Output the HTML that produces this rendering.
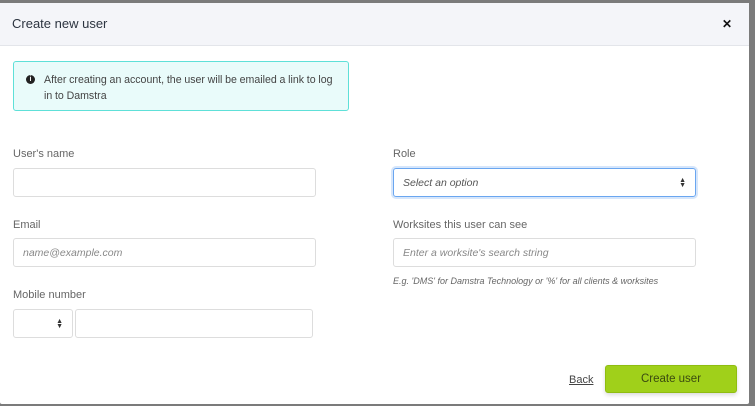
<!DOCTYPE html>
<html><head><style>
*{box-sizing:border-box;margin:0;padding:0}
body{width:755px;height:406px;background:#7b7b7b;font-family:"Liberation Sans",sans-serif;position:relative;overflow:hidden}
.m{position:absolute;left:0;top:3px;width:749px;height:401px;background:#fff;border-radius:2px}
.h{height:43px;background:#f4f5f9;border-bottom:1px solid #e3e5ea;padding:13px 12px;font-size:13px;color:#2c3440;position:relative}
.x{position:absolute;right:17px;top:14px;font-size:12px;font-weight:bold;color:#111}
.info{position:absolute;left:13px;top:58px;width:336px;height:50px;background:#e9fbfa;border:1px solid #5ee0d8;border-radius:3px;font-size:10.6px;color:#444;padding:10px 8px 0 30px;line-height:16px;word-spacing:-0.2px}
.ic{position:absolute;left:12px;top:13px;width:9px;height:9px;border-radius:50%;background:#222;color:#fff;font-size:7px;line-height:9px;text-align:center;font-weight:bold}
.l{position:absolute;font-size:11px;color:#666}
.i{position:absolute;border:1px solid #ddd;border-radius:3px;height:29px;font-size:10.5px;font-style:italic;color:#888;padding:8px 9px}
.s{border:1px solid #6aa6f0;box-shadow:0 0 0 2px #d6e6fb;color:#555}
.ar{position:absolute;right:9px;top:9px;font-size:7px;line-height:5px;color:#333;font-style:normal}
.hint{position:absolute;left:393px;top:273px;font-size:9px;font-style:italic;color:#666}
.back{position:absolute;left:569px;top:371px;font-size:11px;color:#444;text-decoration:underline}
.btn{position:absolute;left:605px;top:362px;width:132px;height:28px;background:#a0d01a;border:1px solid #8fbd10;border-radius:3px;font-size:11.5px;color:#3a4a10;text-align:center;line-height:26px;box-shadow:0 2px 4px rgba(0,0,0,.15)}
</style></head><body>
<div class="m">
<div class="h">Create new user<span class="x">✕</span></div>
<div class="info"><span class="ic">i</span>After creating an account, the user will be emailed a link to log in to Damstra</div>
<div class="l" style="left:13px;top:145px">User's name</div>
<div class="i" style="left:13px;top:165px;width:303px"></div>
<div class="l" style="left:13px;top:216px">Email</div>
<div class="i" style="left:13px;top:235px;width:303px">name@example.com</div>
<div class="l" style="left:13px;top:286px">Mobile number</div>
<div class="i" style="left:13px;top:306px;width:60px"><span class="ar">▲<br>▼</span></div>
<div class="i" style="left:75px;top:306px;width:238px"></div>
<div class="l" style="left:393px;top:145px">Role</div>
<div class="i s" style="left:393px;top:165px;width:303px">Select an option<span class="ar">▲<br>▼</span></div>
<div class="l" style="left:393px;top:216px">Worksites this user can see</div>
<div class="i" style="left:393px;top:235px;width:303px">Enter a worksite's search string</div>
<div class="hint">E.g. 'DMS' for Damstra Technology or '%' for all clients &amp; worksites</div>
<div class="back">Back</div>
<div class="btn">Create user</div>
</div>
</body></html>
